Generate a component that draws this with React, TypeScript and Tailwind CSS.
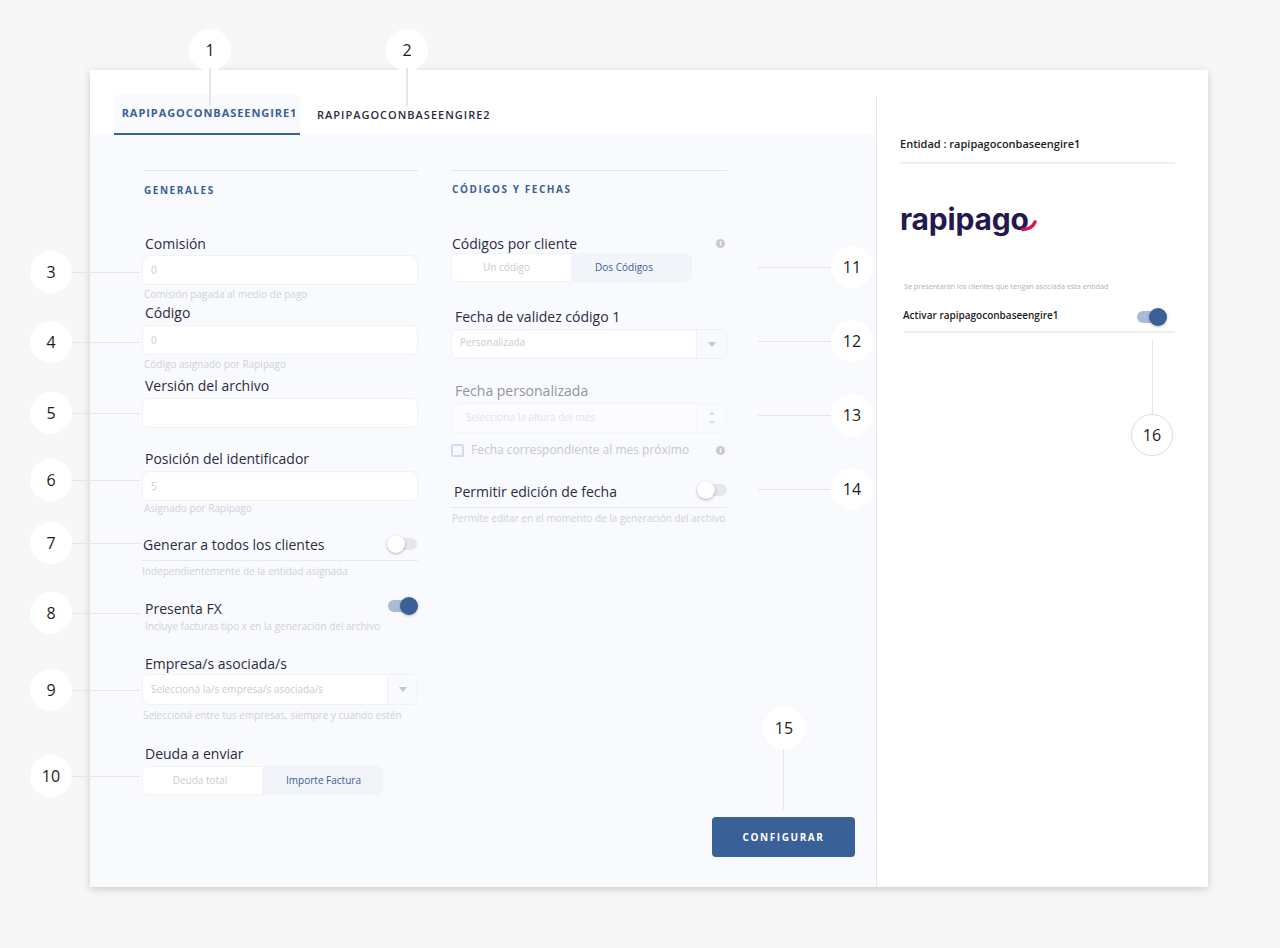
const labelCls = 'block text-[14px] leading-[20px] text-[#2c2c40]'
const helpCls = 'block text-[10px] leading-[14px] text-[#cfd1d8]'
const fieldCls = 'h-[30px] w-full rounded-[6px] border border-[#f0f1f5] bg-white text-[10px] text-[#c9cbd2] flex items-center'

// line leaving a callout circle, relative to the 42px circle
const lineLeft = 'left-[42px] top-[21px] h-px w-[68px]'
const lineRight = 'right-[42px] top-[21px] h-px w-[73px]'

function Toggle({ on }: { on?: boolean }) {
  return (
    <div className="relative h-[12px] w-[30px]">
      <div className={`absolute inset-y-0 rounded-full ${on ? 'left-0 right-[2px] bg-[#a9bbd6]' : 'left-0 right-0 bg-[#e6e7ed]'}`} />
      <div
        className={`absolute top-[-3px] h-[18px] w-[18px] rounded-full ${
          on ? 'right-0 bg-[#3a6098] shadow-[0_1px_3px_rgba(0,0,0,0.25)]' : 'left-0 bg-white shadow-[0_1px_3px_rgba(0,0,0,0.3)]'
        }`}
      />
    </div>
  )
}

function Info() {
  return (
    <span className="flex h-[9px] w-[9px] items-center justify-center rounded-full bg-[#c9cad0] text-[7px] font-bold leading-none text-white">
      i
    </span>
  )
}

function Segmented({ left, right, leftCls, rightCls }: { left: string; right: string; leftCls: string; rightCls: string }) {
  return (
    <div className="flex h-[29px] w-[241px] overflow-hidden rounded-[6px] border border-[#f2f3f7] text-[10px]">
      <div className={`flex w-[119px] items-center justify-center bg-white text-[#c9cbd2] ${leftCls}`}>{left}</div>
      <div className={`flex flex-1 items-center justify-center bg-[#f2f4f9] text-[#3a6098] ${rightCls}`}>{right}</div>
    </div>
  )
}

function Caret() {
  return (
    <div className="flex h-full w-[30px] shrink-0 items-center justify-center border-l border-[#f0f1f5] bg-[#f9fafe]">
      <svg width="8" height="5" viewBox="0 0 8 5">
        <path d="M0 0h8L4 5z" fill="#c4c6ce" />
      </svg>
    </div>
  )
}

function Callout({ n, className, line, bordered }: { n: number; className: string; line: string; bordered?: boolean }) {
  return (
    <div
      className={`absolute flex h-[42px] w-[42px] items-center justify-center rounded-full bg-white text-[16px] text-[#1c1c1c] ${
        bordered ? 'border border-[#dcdcdc]' : ''
      } ${className}`}
    >
      <div className={`absolute bg-[#e6e6ea] ${line}`} />
      {n}
    </div>
  )
}

export default function App() {
  return (
    <div className="relative h-[948px] w-[1280px] overflow-hidden bg-[#f7f7f7] pl-[90px] pt-[70px] font-['Open_Sans',sans-serif]">
      <div className="flex h-[817px] w-[1118px] bg-white shadow-[0_2px_8px_rgba(0,0,0,0.18)]">
        {/* Left panel */}
        <div className="flex w-[786px] flex-col">
          <div className="flex h-[65px] items-start pl-[24px] pt-[25px]">
            <div className="flex h-[40px] w-[186px] items-start justify-center border-b-2 border-[#3a6098] bg-[#f9fafe] pl-[5px] pt-[9px] text-[11px] font-bold leading-[18px] tracking-[0.94px] text-[#3a6098]">
              RAPIPAGOCONBASEENGIRE1
            </div>
            <div className="ml-[17px] pt-[11px] text-[11px] font-semibold leading-[18px] tracking-[1px] text-[#2c2c40]">
              RAPIPAGOCONBASEENGIRE2
            </div>
          </div>

          <div className="flex flex-1 flex-col bg-[#f9fafe]">
            <div className="flex flex-1 gap-[33px] pl-[52px] pt-[35px]">
              {/* Generales */}
              <div className="w-[276px]">
                <div className="ml-px border-t border-[#e4e5ea] pl-px pt-[12px] text-[10px] font-bold leading-[14px] tracking-[1.55px] text-[#3a6098]">
                  GENERALES
                </div>
                <label className={`${labelCls} ml-[3px] mt-[37px]`}>Comisión</label>
                <div className={`${fieldCls} mt-px pl-[8px] pt-px`}>0</div>
                <span className={`${helpCls} ml-[2px] mt-[2px]`}>Comisión pagada al medio de pago</span>
                <label className={`${labelCls} ml-[3px] mt-[2px]`}>Código</label>
                <div className={`${fieldCls} mt-[2px] pl-[8px] pt-px`}>0</div>
                <span className={`${helpCls} ml-[2px] mt-[2px]`}>Código asignado por Rapipago</span>
                <label className={`${labelCls} ml-[3px] mt-[5px]`}>Versión del archivo</label>
                <div className={`${fieldCls} mt-[2px]`} />
                <label className={`${labelCls} ml-[3px] mt-[21px]`}>Posición del identificador</label>
                <div className={`${fieldCls} mt-[2px] pl-[8px]`}>5</div>
                <span className={`${helpCls} ml-[2px]`}>Asignado por Rapipago</span>
                <div className="mt-[20px] flex h-[20px] items-center justify-between pl-px pr-px">
                  <span className="text-[14px] leading-[20px] text-[#2c2c40]">Generar a todos los clientes</span>
                  <div className="-mt-[2px]">
                    <Toggle />
                  </div>
                </div>
                <div className="mt-[5px] border-t border-[#e8e9ee]" />
                <span className={`${helpCls} mt-[3px]`}>Independientemente de la entidad asignada</span>
                <div className="mt-[21px] flex h-[20px] items-center justify-between pl-[3px]">
                  <span className="text-[14px] leading-[20px] text-[#2c2c40]">Presenta FX</span>
                  <div className="-mt-[6px]">
                    <Toggle on />
                  </div>
                </div>
                <span className={`${helpCls} ml-[3px]`}>Incluye facturas tipo x en la generación del archivo</span>
                <label className={`${labelCls} ml-[3px] mt-[21px]`}>Empresa/s asociada/s</label>
                <div className={`${fieldCls} h-[31px] justify-between overflow-hidden pl-[8px]`}>
                  <span>Seleccioná la/s empresa/s asociada/s</span>
                  <Caret />
                </div>
                <span className={`${helpCls} ml-px mt-[3px]`}>Seleccioná entre tus empresas, siempre y cuando estén</span>
                <label className={`${labelCls} ml-[3px] mt-[22px]`}>Deuda a enviar</label>
                <div className="mt-[2px]">
                  <Segmented left="Deuda total" right="Importe Factura" leftCls="pr-[5px]" rightCls="pl-[3px]" />
                </div>
              </div>

              {/* Codigos y fechas */}
              <div className="w-[276px]">
                <div className="border-t border-[#e4e5ea] pl-px pt-[11px] text-[10px] font-bold leading-[14px] tracking-[1.55px] text-[#3a6098]">
                  CÓDIGOS Y FECHAS
                </div>
                <div className="mt-[38px] flex items-center justify-between pl-px pr-[2px]">
                  <span className="text-[14px] leading-[20px] text-[#2c2c40]">Códigos por cliente</span>
                  <div className="-mt-[2px]">
                    <Info />
                  </div>
                </div>
                <div className="-mt-px">
                  <Segmented left="Un código" right="Dos Códigos" leftCls="pr-[10px]" rightCls="pr-[14px]" />
                </div>
                <label className={`${labelCls} ml-[4px] mt-[25px]`}>Fecha de validez código 1</label>
                <div className={`${fieldCls} mt-[2px] justify-between overflow-hidden pl-[8px]`}>
                  <span className="-mt-[3px]">Personalizada</span>
                  <Caret />
                </div>
                <div className="opacity-50">
                  <label className={`${labelCls} ml-[4px] mt-[22px]`}>Fecha personalizada</label>
                  <div className={`${fieldCls} mt-[2px] h-[29px] justify-between overflow-hidden pl-[14px]`}>
                    <span className="-mt-[2px]">Selecciona la altura del mes</span>
                    <div className="flex h-full w-[30px] flex-col items-center justify-center gap-[6px] border-l border-[#f0f1f5] bg-[#f9fafe]">
                      <svg width="6" height="4" viewBox="0 0 6 4">
                        <path d="M3 0l3 4H0z" fill="#c4c6ce" />
                      </svg>
                      <svg width="6" height="4" viewBox="0 0 6 4">
                        <path d="M0 0h6L3 4z" fill="#c4c6ce" />
                      </svg>
                    </div>
                  </div>
                </div>
                <div className="mt-[8px] flex h-[18px] items-center pr-[2px]">
                  <div className="h-[13px] w-[13px] rounded-[2px] border-2 border-[#d3dcec] bg-[#f9fafe]" />
                  <span className="ml-[7px] text-[12px] leading-[18px] text-[#c6c8cf]">Fecha correspondiente al mes próximo</span>
                  <div className="ml-auto">
                    <Info />
                  </div>
                </div>
                <div className="mt-[23px] flex h-[20px] items-center justify-between pl-[3px]">
                  <span className="text-[14px] leading-[20px] text-[#2c2c40]">Permitir edición de fecha</span>
                  <div className="-mt-[4px]">
                    <Toggle />
                  </div>
                </div>
                <div className="mt-[5px] border-t border-[#e8e9ee]" />
                <span className={`${helpCls} ml-px mt-[3px]`}>Permite editar en el momento de la generación del archivo</span>
              </div>
            </div>

            <div className="flex justify-end pb-[30px] pr-[21px]">
              <button className="h-[40px] w-[143px] rounded-[4px] bg-[#3a6098] text-[10px] font-bold tracking-[1.6px] text-white">
                CONFIGURAR
              </button>
            </div>
          </div>
        </div>

        {/* Right panel */}
        <div className="mt-[25px] flex-1 border-l border-[#e6e7ea] pl-[23px] pr-[33px]">
          <div className="border-b-2 border-[#eeeeef] pb-[10px] pt-[41px] text-[11px] font-semibold leading-[16px] text-[#1d1d1d]">
            Entidad : rapipagoconbaseengire1
          </div>
          <div className="mt-[37px] flex h-[43px] items-start">
            <span className="font-['Inter',sans-serif] text-[30px] font-bold leading-[36px] tracking-[-0.2px] text-[#23184f]">rapipago</span>
            <svg className="mt-[19px] -ml-[8px]" width="16" height="12" viewBox="0 0 16 12">
              <path d="M14 2C12.5 6 8 9 2 9.5" fill="none" stroke="#dc1450" strokeWidth="3.5" strokeLinecap="round" />
            </svg>
          </div>
          <div className="ml-[4px] mt-[37px] text-[7.2px] font-medium leading-[10px] text-[#b0b0b0]">
            Se presentarán los clientes que tengan asociada esta entidad
          </div>
          <div className="mt-[14px] flex h-[20px] items-center justify-between pl-[3px] pr-[8px]">
            <span className="text-[10px] font-semibold leading-[20px] text-[#1d1d1d]">Activar rapipagoconbaseengire1</span>
            <div className="mt-[3px]">
              <Toggle on />
            </div>
          </div>
          <div className="ml-[4px] mt-[6px] border-t-2 border-[#eeeeef]" />
        </div>
      </div>

      {/* Annotations */}
      <Callout n={1} className="left-[189px] top-[29px]" line="left-[20px] top-[39px] h-[38px] w-[2px]" />
      <Callout n={2} className="left-[386px] top-[29px]" line="left-[20px] top-[39px] h-[38px] w-[2px]" />
      <Callout n={3} className="left-[30px] top-[251px]" line={lineLeft} />
      <Callout n={4} className="left-[30px] top-[321px]" line={lineLeft} />
      <Callout n={5} className="left-[30px] top-[392px]" line={lineLeft} />
      <Callout n={6} className="left-[30px] top-[459px]" line={lineLeft} />
      <Callout n={7} className="left-[30px] top-[522px]" line={lineLeft} />
      <Callout n={8} className="left-[30px] top-[592px]" line={lineLeft} />
      <Callout n={9} className="left-[30px] top-[669px]" line={lineLeft} />
      <Callout n={10} className="left-[30px] top-[755px]" line={lineLeft} />
      <Callout n={11} className="left-[831px] top-[246px]" line={lineRight} />
      <Callout n={12} className="left-[831px] top-[320px]" line={lineRight} />
      <Callout n={13} className="left-[831px] top-[394px]" line={lineRight} />
      <Callout n={14} className="left-[831px] top-[468px]" line={lineRight} />
      <Callout n={15} className="left-[763px] top-[707px]" line="left-[20px] top-[42px] h-[61px] w-px" />
      <Callout n={16} className="left-[1131px] top-[414px]" line="bottom-[41px] left-[20px] h-[74px] w-px" bordered />
    </div>
  )
}
